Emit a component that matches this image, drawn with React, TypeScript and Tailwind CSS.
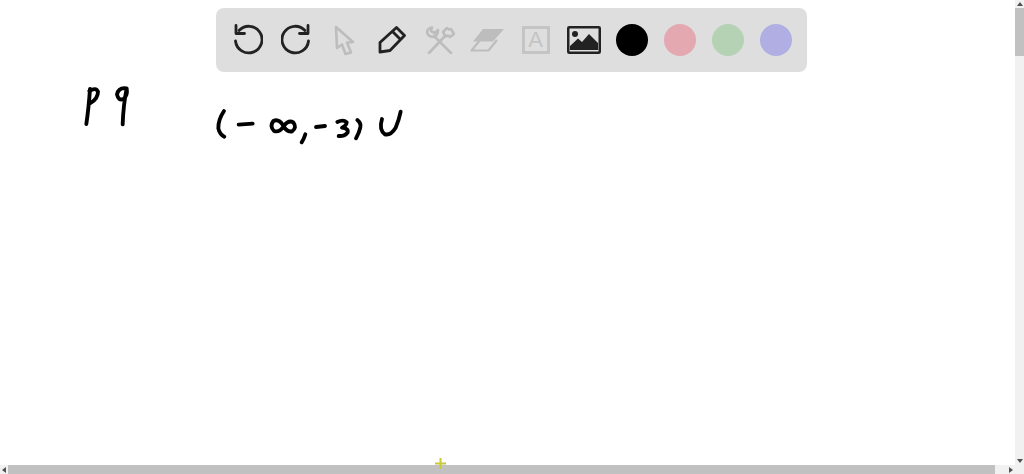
import { ReactNode } from "react";

const ACTIVE = "#222222";
const MUTED = "#bdbdbd";

const ToolCell = ({ children }: { children: ReactNode }) => (
  <div className="flex h-12 w-12 shrink-0 items-center justify-center">{children}</div>
);

const ColorDot = ({ className }: { className: string }) => (
  <ToolCell>
    <div className={`h-8 w-8 rounded-full ${className}`} />
  </ToolCell>
);

const UndoIcon = ({ flip = false }: { flip?: boolean }) => (
  <svg width="30" height="32" viewBox="0 0 30 32" fill="none" className={flip ? "-scale-x-100" : ""}>
    <path d="M6 6.5 A13.3 13.3 0 1 1 2.5 17" stroke={ACTIVE} strokeWidth="2.8" strokeLinecap="round" />
    <path d="M3 1.5 V9.5 H11.5" stroke={ACTIVE} strokeWidth="2.8" strokeLinecap="round" strokeLinejoin="round" />
  </svg>
);

const CursorIcon = () => (
  <svg width="22" height="31" viewBox="0 0 22 31" fill="none">
    <path
      d="M3 2 L20 17 L14 17.5 L18 27.5 L12.5 29 L9 19.5 L4 23 Z"
      stroke={MUTED}
      strokeWidth="2.6"
      strokeLinejoin="round"
    />
  </svg>
);

const PencilIcon = () => (
  <svg width="28" height="28" viewBox="0 0 28 28" fill="none">
    <path d="M18.5 1.5 L26.5 9.5 L12 24.5 L2 26 L2 16.5 Z" stroke={ACTIVE} strokeWidth="2.8" strokeLinejoin="round" />
    <path d="M14.5 5.5 L22.5 13.5" stroke={ACTIVE} strokeWidth="2.8" />
  </svg>
);

const ToolsIcon = () => (
  <svg width="30" height="28" viewBox="0 0 30 28" fill="none" stroke={MUTED} strokeWidth="2.6">
    <path d="M9 10 L26 27" strokeLinecap="round" />
    <path d="M7 1.5 Q3 2 2 6 Q3 11 9 11 Q13 9 13 4 L9.5 7 L6 5 Z" strokeLinejoin="round" />
    <path d="M4 27 L20 10" strokeLinecap="round" />
    <path d="M18 6 L22 2 L24 3.5 L26 3 L29 8 L25 11 L23 9.5 L20.5 10.5 Z" strokeLinejoin="round" />
  </svg>
);

const EraserIcon = () => (
  <svg width="35" height="24" viewBox="0 0 35 24" fill="none">
    <path d="M13 1 H34 L23 13.5 H3 Z" fill={MUTED} />
    <path d="M11 11 L1.5 22.5 H18.5 L27 12" stroke={MUTED} strokeWidth="2.2" strokeLinejoin="round" />
  </svg>
);

const TextBoxIcon = () => (
  <div className="flex h-[28px] w-[28px] items-center justify-center border-[3px] border-[#c4c4c4]">
    <span className="font-['Liberation_Sans',sans-serif] text-[22px] leading-none text-[#c4c4c4]">A</span>
  </div>
);

const ImageIcon = () => (
  <svg width="34" height="28" viewBox="0 0 34 28" fill="none">
    <rect x="1.25" y="1.25" width="31.5" height="25.5" rx="1" stroke={ACTIVE} strokeWidth="2.5" />
    <circle cx="8" cy="8" r="3" fill={ACTIVE} />
    <path d="M3 24 V20 L11 12.5 L15 16 L22 8 L31 17 V24 Z" fill={ACTIVE} />
  </svg>
);

// the handwriting on the board, coordinates are 3x the page pixels
const INK = [
  "M60 42 Q56 100 49 147",
  "M58 48 Q78 36 84 50 Q84 70 62 84",
  "M170 40 Q146 36 141 58 Q145 78 160 72 Q174 62 170 40 Q160 90 158 148",
  "M462 108 Q444 135 445 160 Q449 178 463 185",
  "M506 149 L548 146",
  "M640 152 Q626 130 610 138 Q598 154 612 168 Q628 174 642 152 Q656 134 670 142 Q682 158 666 169 Q650 172 640 152",
  "M706 178 Q702 192 695 202",
  "M738 156 L765 153",
  "M802 141 Q820 132 830 142 Q830 152 816 158 Q836 160 833 172 Q825 184 806 183",
  "M862 135 Q874 145 871 157 Q868 172 858 190",
  "M936 132 Q926 165 945 178 Q962 182 977 158 Q987 135 992 110",
];

export default function App() {
  return (
    <div className="relative flex h-screen w-screen flex-col overflow-hidden bg-white">
      <div className="flex min-h-0 flex-1">
        <main className="relative flex-1">
          <div className="ml-[216px] mt-2 flex h-16 w-[591px] items-center rounded-lg bg-[#dedede] pl-[7.5px]">
            <ToolCell>
              <UndoIcon />
            </ToolCell>
            <ToolCell>
              <UndoIcon flip />
            </ToolCell>
            <ToolCell>
              <CursorIcon />
            </ToolCell>
            <ToolCell>
              <PencilIcon />
            </ToolCell>
            <ToolCell>
              <ToolsIcon />
            </ToolCell>
            <ToolCell>
              <EraserIcon />
            </ToolCell>
            <ToolCell>
              <TextBoxIcon />
            </ToolCell>
            <ToolCell>
              <ImageIcon />
            </ToolCell>
            <ColorDot className="bg-black" />
            <ColorDot className="bg-[#e4a8b0]" />
            <ColorDot className="bg-[#b5d2b5]" />
            <ColorDot className="bg-[#b0aee2]" />
          </div>

          <svg
            width="350"
            height="80"
            viewBox="0 0 1050 240"
            fill="none"
            className="absolute left-[70px] top-[75px]"
          >
            {INK.map((d) => (
              <path key={d} d={d} stroke="#000" strokeWidth="11.5" strokeLinecap="round" strokeLinejoin="round" />
            ))}
          </svg>
        </main>

        {/* vertical scrollbar */}
        <div className="flex w-[9px] shrink-0 flex-col bg-[#f1f1f1]">
          <div className="flex h-2 items-center justify-center">
            <div className="h-0 w-0 border-x-[3px] border-b-[4px] border-x-transparent border-b-[#505050]" />
          </div>
          <div className="h-12 bg-[#c1c1c1]" />
          <div className="flex-1" />
          <div className="flex h-2 items-center justify-center">
            <div className="h-0 w-0 border-x-[3px] border-t-[4px] border-x-transparent border-t-[#505050]" />
          </div>
        </div>
      </div>

      {/* horizontal scrollbar */}
      <div className="flex h-[9px] shrink-0 bg-[#f1f1f1]">
        <div className="flex w-2 items-center justify-center">
          <div className="h-0 w-0 border-y-[3px] border-r-[4px] border-y-transparent border-r-[#505050]" />
        </div>
        <div className="w-[987px] bg-[#c1c1c1]" />
        <div className="flex-1" />
        <div className="mr-[9px] flex w-2 items-center justify-center">
          <div className="h-0 w-0 border-y-[3px] border-l-[4px] border-y-transparent border-l-[#505050]" />
        </div>
      </div>

      <svg width="11" height="11" viewBox="0 0 11 11" className="absolute left-[435px] top-[458px]">
        <path d="M5.5 0 V11 M0 5.5 H11" stroke="#c8c93c" strokeWidth="2" />
      </svg>
    </div>
  );
}
